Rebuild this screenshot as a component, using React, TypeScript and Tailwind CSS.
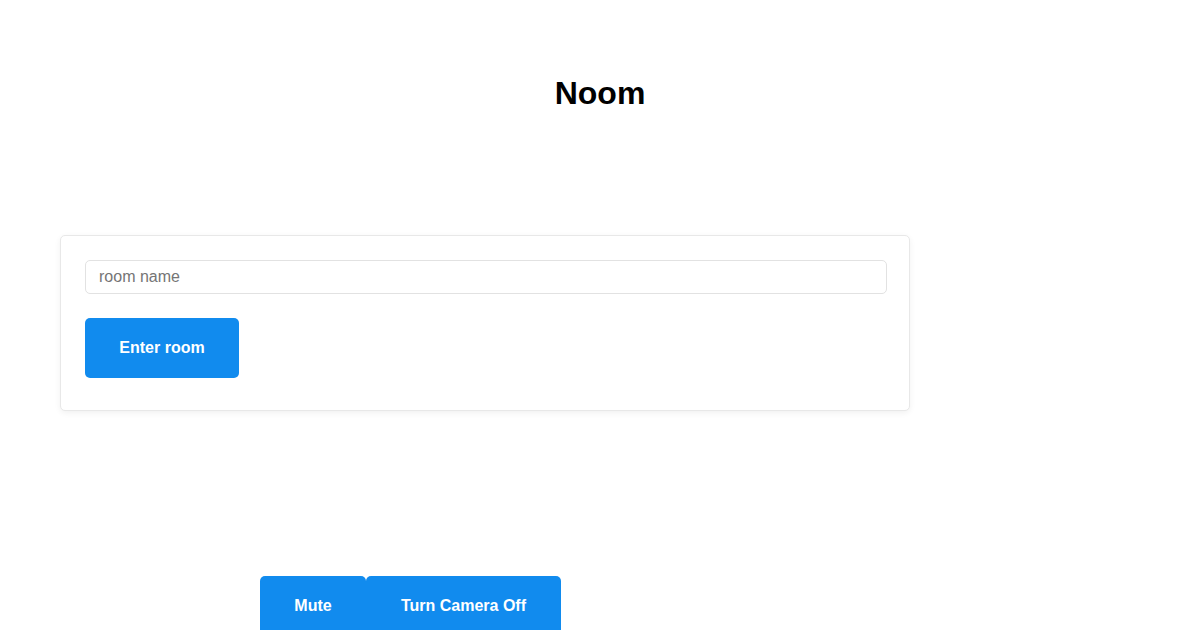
export default function App() {
  return (
    <div className="min-h-[630px] bg-white font-['Liberation_Sans',Arial,sans-serif] text-black">
      <header className="pt-[75px] text-center">
        <h1 className="text-[32px] font-bold leading-[37px]">Noom</h1>
      </header>

      <main className="px-[60px] pt-[123px]">
        <form
          className="w-[850px] rounded-[5px] border border-[#e8e8e8] bg-white p-6 pb-[32px] shadow-[0_2px_6px_rgba(0,0,0,0.06)]"
          onSubmit={(e) => e.preventDefault()}
        >
          <input
            type="text"
            placeholder="room name"
            className="block h-[34px] w-[802px] rounded-[5px] border border-[#e2e2e2] px-[13px] text-[16px] text-black outline-none placeholder:text-[#757575]"
          />
          <button
            type="submit"
            className="mt-6 h-[60px] w-[154px] rounded-[5px] bg-[#118bee] text-[16px] font-bold text-white"
          >
            Enter room
          </button>
        </form>
      </main>

      <div className="flex pl-[260px] pt-[165px]">
        <button className="h-[60px] w-[106px] rounded-t-[5px] bg-[#118bee] text-[16px] font-bold text-white">
          Mute
        </button>
        <button className="h-[60px] w-[195px] rounded-t-[5px] bg-[#118bee] text-[16px] font-bold text-white">
          Turn Camera Off
        </button>
      </div>
    </div>
  );
}
